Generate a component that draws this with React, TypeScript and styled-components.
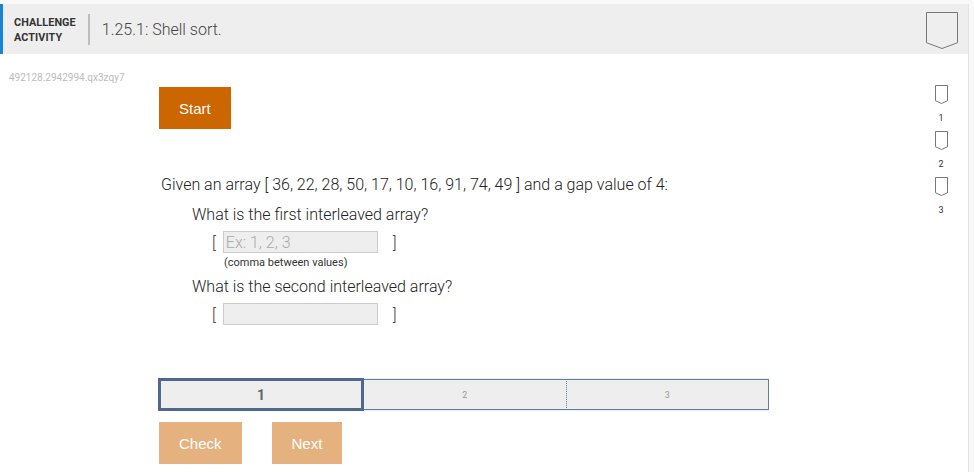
import React from 'react';
import styled, { createGlobalStyle } from 'styled-components';

const GlobalStyle = createGlobalStyle`
  html, body {
    margin: 0;
    padding: 0;
    background: #f4f4f4;
    font-family: Roboto, "Liberation Sans", Arial, sans-serif;
  }
`;

// Bookmark-like level marker
const LevelIcon: React.FC<{ w: number; h: number }> = ({ w, h }) => (
    <svg width={w} height={h} viewBox={`0 0 ${w} ${h}`}>
        <polygon
            points={`0.5,0.5 ${w - 0.5},0.5 ${w - 0.5},${h * 0.83} ${w / 2},${h - 0.5} 0.5,${h * 0.83}`}
            fill="none"
            stroke="#777"
            strokeWidth={1}
        />
    </svg>
);

const levels = [1, 2, 3];

const App: React.FC = () => {
    return (
        <>
            <GlobalStyle />
            <Page>
                <Card>
                    <Header>
                        <Label>CHALLENGE<br />ACTIVITY</Label>
                        <Divider />
                        <Title>1.25.1: Shell sort.</Title>
                        <HeaderIcon>
                            <LevelIcon w={32} h={37} />
                        </HeaderIcon>
                    </Header>
                    <Body>
                        <Main>
                            <ActivityId>492128.2942994.qx3zqy7</ActivityId>
                            <Content>
                                <StartButton>Start</StartButton>
                                <Prompt>
                                    Given an array [ 36, 22, 28, 50, 17, 10, 16, 91, 74, 49 ] and a gap value of 4:
                                </Prompt>
                                <Question>What is the first interleaved array?</Question>
                                <AnswerRow>
                                    <Bracket>[</Bracket>
                                    <AnswerInput placeholder="Ex: 1, 2, 3" />
                                    <Bracket $closing>]</Bracket>
                                </AnswerRow>
                                <Hint>(comma between values)</Hint>
                                <Question $tight>What is the second interleaved array?</Question>
                                <AnswerRow>
                                    <Bracket>[</Bracket>
                                    <AnswerInput />
                                    <Bracket $closing>]</Bracket>
                                </AnswerRow>
                                <Progress>
                                    <Step $active>1</Step>
                                    <Step>2</Step>
                                    <Step $dotted>3</Step>
                                </Progress>
                                <Actions>
                                    <ActionButton disabled>Check</ActionButton>
                                    <ActionButton disabled>Next</ActionButton>
                                </Actions>
                            </Content>
                        </Main>
                        <Sidebar>
                            {levels.map(n => (
                                <Level key={n}>
                                    <LevelIcon w={13} h={19} />
                                    <LevelNumber>{n}</LevelNumber>
                                </Level>
                            ))}
                        </Sidebar>
                    </Body>
                </Card>
            </Page>
        </>
    );
};

const Page = styled.div`
  display: flex;
  height: 472px;
  overflow: hidden;
  padding-top: 4px;
  box-sizing: border-box;
  background: #f9f9f9;
`;

const Card = styled.div`
  width: 968px;
  flex-shrink: 0;
  background: #fff;
  border-right: 1px solid #e4e4e4;
  display: flex;
  flex-direction: column;
`;

const Header = styled.div`
  height: 50px;
  background: #eeeeee;
  border-left: 3px solid #1a83d6;
  display: flex;
  align-items: center;
  padding: 0 10px 0 11px;
`;

const Label = styled.div`
  font-size: 10.8px;
  font-weight: 700;
  line-height: 15px;
  color: #333;
  letter-spacing: 0.1px;
  margin-top: 1px;
`;

const Divider = styled.div`
  width: 2px;
  height: 31px;
  background: #bdbdbd;
  margin: 0 12px 0 12px;
`;

const Title = styled.div`
  flex: 1;
  font-size: 16px;
  font-weight: 300;
  color: #444;
  margin-top: 1px;
`;

const HeaderIcon = styled.div`
  display: flex;
  margin-top: 3px;
`;

const Body = styled.div`
  flex: 1;
  display: flex;
`;

const Main = styled.div`
  flex: 1;
  padding: 18px 0 0 9px;
`;

const ActivityId = styled.div`
  font-size: 10px;
  color: #bbb;
  line-height: 12px;
`;

const Content = styled.div`
  margin-left: 150px;
  margin-top: 3px;
  display: flex;
  flex-direction: column;
  align-items: flex-start;
`;

const StartButton = styled.button`
  height: 42px;
  background: #cc6600;
  color: #fff;
  border: none;
  font-family: "Liberation Sans", Arial, sans-serif;
  font-size: 15px;
  padding: 0 20px;
  cursor: pointer;
`;

const Prompt = styled.div`
  font-size: 16px;
  font-weight: 300;
  color: #222;
  line-height: 20px;
  margin-top: 46px;
  margin-left: 2px;
`;

const Question = styled.div<{ $tight?: boolean }>`
  font-size: 16px;
  font-weight: 300;
  color: #222;
  line-height: 20px;
  margin-top: ${p => (p.$tight ? '7px' : '10px')};
  margin-left: 33px;
`;

const AnswerRow = styled.div`
  display: flex;
  align-items: center;
  margin-left: 53px;
  margin-top: 6px;
`;

const Bracket = styled.span<{ $closing?: boolean }>`
  font-size: 16px;
  font-weight: 300;
  color: #444;
  margin: ${p => (p.$closing ? '0 0 0 15px' : '0 7px 0 0')};
`;

const AnswerInput = styled.input`
  width: 155px;
  height: 22px;
  box-sizing: border-box;
  background: #eeeeee;
  border: 1px solid #cccccc;
  font-family: inherit;
  font-weight: 300;
  font-size: 16px;
  color: #333;
  padding: 0 2px;

  &::placeholder {
    color: #aaa;
  }
`;

const Hint = styled.div`
  font-size: 11px;
  color: #333;
  line-height: 14px;
  margin-left: 65px;
  margin-top: 3px;
`;

const Progress = styled.div`
  display: flex;
  width: 611px;
  height: 33px;
  margin-top: 53px;
  margin-left: -1px;
  background: #eeeeee;
`;

const Step = styled.div<{ $active?: boolean; $dotted?: boolean }>`
  flex: ${p => (p.$active ? '0 0 206px' : '1')};
  box-sizing: border-box;
  display: flex;
  align-items: center;
  justify-content: center;
  border: ${p => (p.$active ? '3px solid #50688c' : '1px solid #5b7fa6')};
  border-left: ${p => (p.$active ? '3px solid #50688c' : p.$dotted ? '1px dotted #5b7fa6' : 'none')};
  border-right: ${p => (p.$active ? '3px solid #50688c' : p.$dotted ? '1px solid #5b7fa6' : 'none')};
  ${p => (!p.$active ? 'margin: 1px 0;' : '')}
  font-size: ${p => (p.$active ? '14px' : '9px')};
  font-weight: ${p => (p.$active ? 700 : 400)};
  color: ${p => (p.$active ? '#666' : '#999')};
`;

const Actions = styled.div`
  display: flex;
  gap: 30px;
  margin-top: 11px;
`;

const ActionButton = styled.button`
  height: 42px;
  background: #cc6600;
  opacity: 0.5;
  color: #fff;
  border: none;
  font-family: "Liberation Sans", Arial, sans-serif;
  font-size: 15px;
  padding: 0 20px;
`;

const Sidebar = styled.div`
  width: 45px;
  display: flex;
  flex-direction: column;
  align-items: flex-start;
  padding-top: 31px;
  gap: 8px;
`;

const Level = styled.div`
  display: flex;
  flex-direction: column;
  align-items: center;
  width: 14px;
  margin-left: 11px;
`;

const LevelNumber = styled.div`
  font-size: 9px;
  color: #333;
  margin-top: 9px;
  line-height: 10px;
`;

export default App;
